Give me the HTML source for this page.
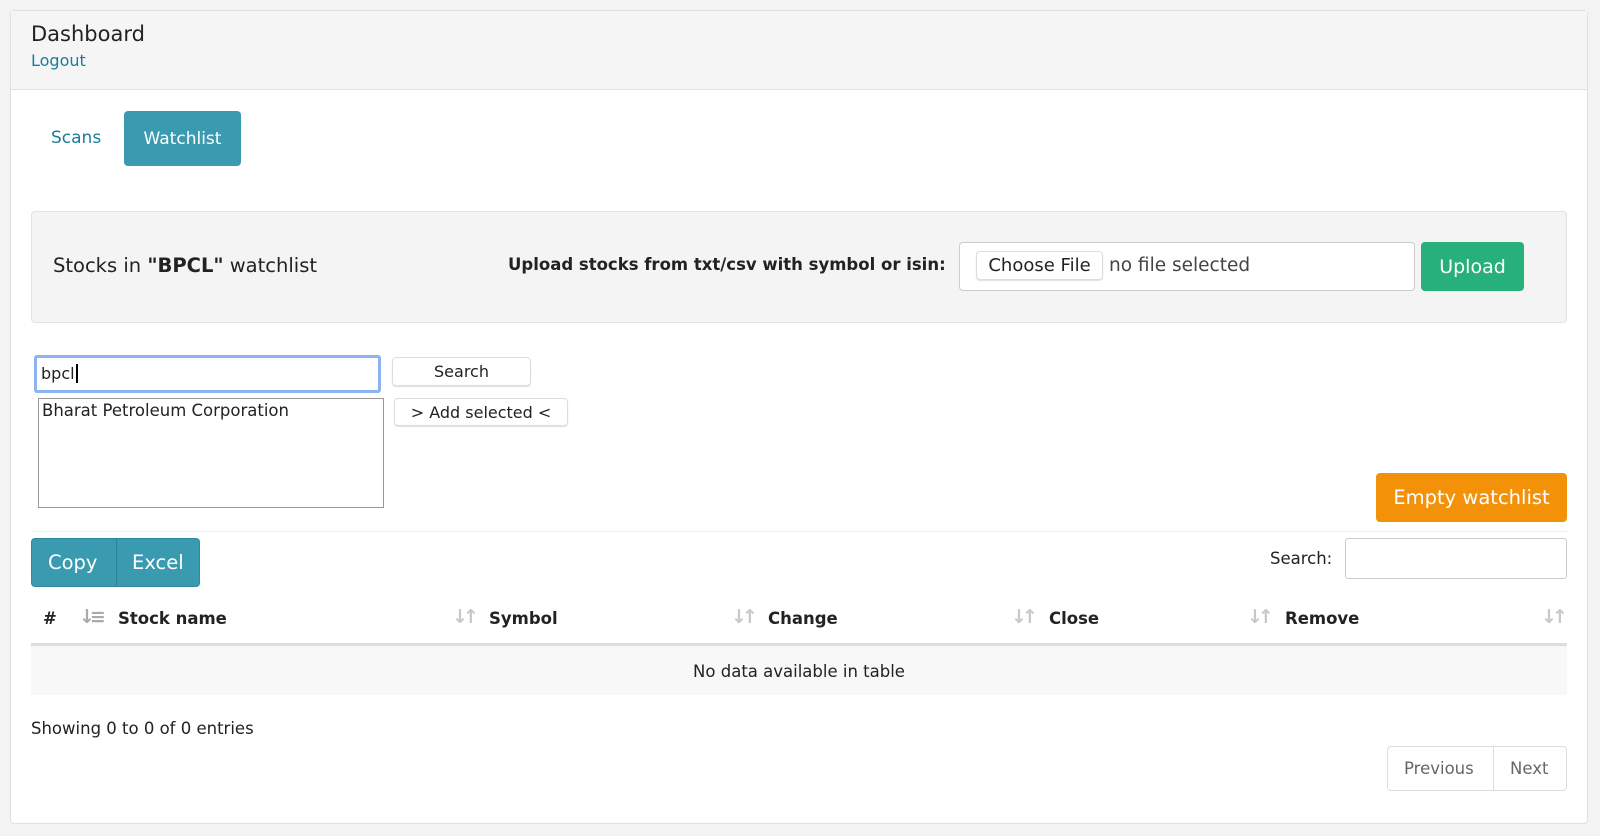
<!DOCTYPE html>
<html><head><meta charset="utf-8"><style>
*{box-sizing:border-box;margin:0;padding:0}
body{width:1600px;height:836px;background:#f3f3f3;font-family:"DejaVu Sans",Verdana,sans-serif;color:#222;position:relative;overflow:hidden}
.a{position:absolute}
.panel{left:10px;top:10px;width:1578px;height:814px;background:#fff;border:1px solid #d8e2e8;border-radius:4px}
.hdr{left:11px;top:11px;width:1576px;height:79px;background:#f5f5f5;border-bottom:1px solid #dde3e6}
.btn{display:flex;align-items:center;justify-content:center;border-radius:4px}
.w{background:#fff;border:1px solid #ddd;box-shadow:0 1px 1px rgba(0,0,0,.12);font-size:16px;color:#222}
.h{font-weight:bold;font-size:16.5px;top:609px}
.ic{top:606px;color:#c8c8c8;font-size:19px;font-weight:bold;letter-spacing:-5px}
</style></head><body>
<div class="a panel"></div>
<div class="a hdr"></div>
<div class="a" style="left:31px;top:22px;font-size:21px;color:#222">Dashboard</div>
<div class="a" style="left:31px;top:51px;font-size:16px;color:#1a7d99">Logout</div>
<div class="a" style="left:51px;top:128px;font-size:17px;color:#1a7d99">Scans</div>
<div class="a btn" style="left:124px;top:111px;width:117px;height:55px;background:#3a9ab0;color:#fff;font-size:17px">Watchlist</div>

<div class="a" style="left:31px;top:211px;width:1536px;height:112px;background:#f4f4f4;border:1px solid #e2e2e2;border-radius:4px"></div>
<div class="a" style="left:53px;top:254px;font-size:19.5px">Stocks in <b>"BPCL"</b> watchlist</div>
<div class="a" style="left:508px;top:255px;font-size:16.5px;font-weight:bold">Upload stocks from txt/csv with symbol or isin:</div>
<div class="a" style="left:959px;top:242px;width:456px;height:49px;background:#fff;border:1px solid #ccc;border-radius:4px"></div>
<div class="a btn w" style="left:976px;top:251px;width:127px;height:29px;font-size:18px">Choose File</div>
<div class="a" style="left:1109px;top:255px;font-size:18.5px;color:#444">no file selected</div>
<div class="a btn" style="left:1421px;top:242px;width:103px;height:49px;background:#27b07b;color:#fff;font-size:19px">Upload</div>

<div class="a" style="left:34px;top:355px;width:347px;height:38px;border:3px solid #8db3f3;border-radius:3px;background:#fff;font-size:16px;padding:6px 4px">bpcl<span style="border-left:2px solid #000;margin-left:1px"></span></div>
<div class="a btn w" style="left:392px;top:357px;width:139px;height:29px">Search</div>
<div class="a" style="left:38px;top:398px;width:346px;height:110px;border:1px solid #999;background:#fff;font-size:16.5px;padding:2px 3px">Bharat Petroleum Corporation</div>
<div class="a btn w" style="left:394px;top:398px;width:174px;height:28px">&gt; Add selected &lt;</div>
<div class="a btn" style="left:1376px;top:473px;width:191px;height:49px;background:#f39208;color:#fff;font-size:19.5px">Empty watchlist</div>
<div class="a" style="left:31px;top:531px;width:1536px;border-top:1px solid #eee"></div>

<div class="a" style="left:31px;top:538px;width:169px;height:49px;background:#3a9ab0;border-radius:4px;border:1px solid #2e8aa0"></div>
<div class="a" style="left:116px;top:538px;width:1px;height:49px;background:#2e8298"></div>
<div class="a" style="left:48px;top:551px;color:#fff;font-size:19.5px">Copy</div>
<div class="a" style="left:132px;top:551px;color:#fff;font-size:19.5px">Excel</div>
<div class="a" style="left:1270px;top:549px;font-size:16.5px">Search:</div>
<div class="a" style="left:1345px;top:538px;width:222px;height:41px;border:1px solid #ccc;border-radius:3px;background:#fff"></div>

<div class="a h" style="left:43px">#</div>
<div class="a ic" style="left:79px;color:#aaa">↓≡</div>
<div class="a h" style="left:118px">Stock name</div>
<div class="a ic" style="left:452px">↓↑</div>
<div class="a h" style="left:489px">Symbol</div>
<div class="a ic" style="left:731px">↓↑</div>
<div class="a h" style="left:768px">Change</div>
<div class="a ic" style="left:1011px">↓↑</div>
<div class="a h" style="left:1049px">Close</div>
<div class="a ic" style="left:1247px">↓↑</div>
<div class="a h" style="left:1285px">Remove</div>
<div class="a ic" style="left:1541px">↓↑</div>
<div class="a" style="left:31px;top:643px;width:1536px;height:3px;background:#ddd"></div>
<div class="a" style="left:31px;top:646px;width:1536px;height:49px;background:#f8f8f8"></div>
<div class="a" style="left:31px;top:662px;width:1536px;text-align:center;font-size:16.5px">No data available in table</div>
<div class="a" style="left:31px;top:719px;font-size:16.5px">Showing 0 to 0 of 0 entries</div>
<div class="a" style="left:1387px;top:746px;width:180px;height:45px;border:1px solid #ddd;border-radius:4px;background:#fff"></div>
<div class="a" style="left:1493px;top:746px;width:1px;height:45px;background:#ddd"></div>
<div class="a" style="left:1404px;top:759px;font-size:16.5px;color:#666">Previous</div>
<div class="a" style="left:1510px;top:759px;font-size:16.5px;color:#666">Next</div>
</body></html>
